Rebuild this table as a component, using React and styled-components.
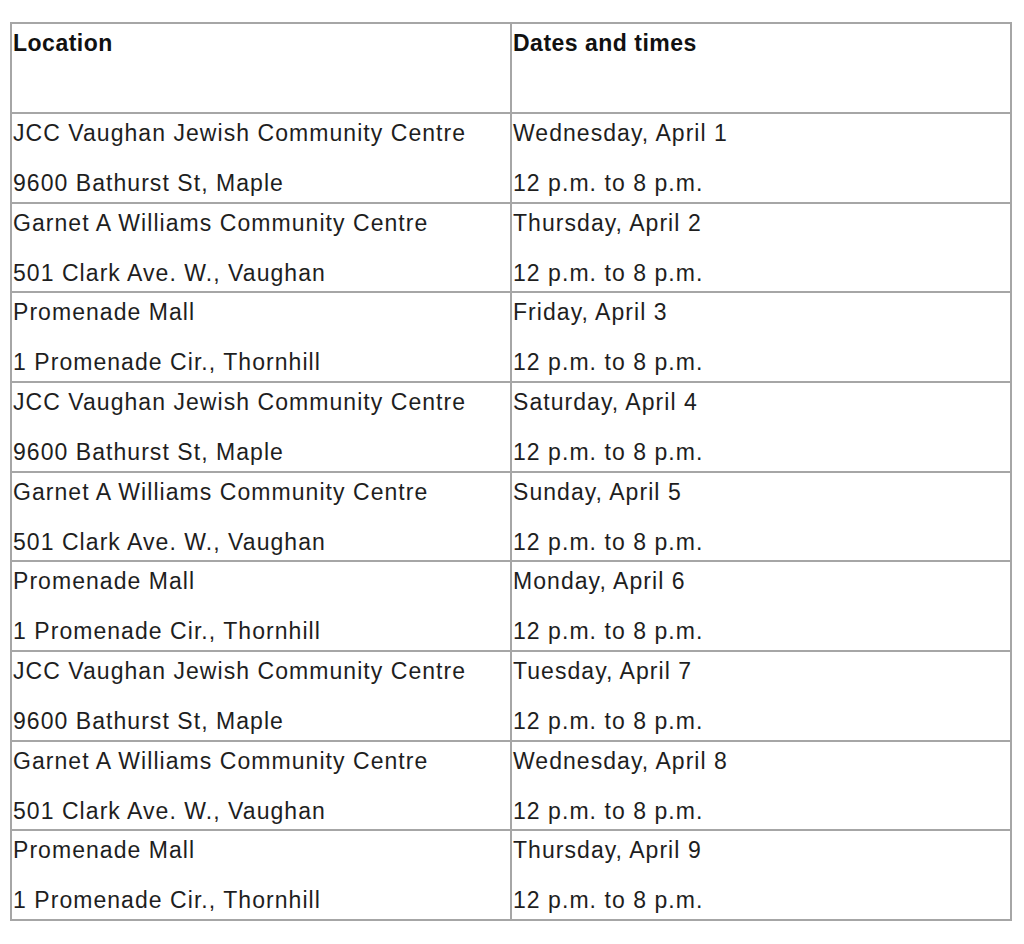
import styled, { createGlobalStyle } from 'styled-components';

const GlobalStyle = createGlobalStyle`
  body {
    margin: 0;
    background: #ffffff;
    font-family: 'Liberation Sans', Arial, sans-serif;
  }
`;

const places = [
  { name: 'JCC Vaughan Jewish Community Centre', address: '9600 Bathurst St, Maple' },
  { name: 'Garnet A Williams Community Centre', address: '501 Clark Ave. W., Vaughan' },
  { name: 'Promenade Mall', address: '1 Promenade Cir., Thornhill' },
];

const days = [
  'Wednesday, April 1',
  'Thursday, April 2',
  'Friday, April 3',
  'Saturday, April 4',
  'Sunday, April 5',
  'Monday, April 6',
  'Tuesday, April 7',
  'Wednesday, April 8',
  'Thursday, April 9',
];

const schedule = days.map((day, i) => ({ ...places[i % 3], day, time: '12 p.m. to 8 p.m.' }));

export default function App() {
  return (
    <Page>
      <GlobalStyle />
      <Table>
        <thead>
          <tr>
            <HeadCell>Location</HeadCell>
            <HeadCell>Dates and times</HeadCell>
          </tr>
        </thead>
        <tbody>
          {schedule.map((row) => (
            <tr key={row.day}>
              <Cell>
                <Line>{row.name}</Line>
                <Line>{row.address}</Line>
              </Cell>
              <Cell>
                <Line>{row.day}</Line>
                <Line>{row.time}</Line>
              </Cell>
            </tr>
          ))}
        </tbody>
      </Table>
    </Page>
  );
}

const Page = styled.div`
  padding: 22px 0 20px 10px;
`;

const Table = styled.table`
  width: 1002px;
  border-collapse: collapse;
  table-layout: fixed;
  color: #1e1e1e;
  font-size: 23px;
  letter-spacing: 1.05px;
`;

const HeadCell = styled.th`
  width: 50%;
  height: 90px;
  box-sizing: border-box;
  border: 2px solid #a6a6a6;
  padding: 5px 1px 0;
  text-align: left;
  vertical-align: top;
  font-weight: 700;
  letter-spacing: 0.5px;
  line-height: 28px;
  color: #111111;
`;

const Cell = styled.td`
  height: 89.67px;
  box-sizing: border-box;
  border: 2px solid #a6a6a6;
  padding: 5px 1px 0;
  vertical-align: top;
`;

const Line = styled.div`
  line-height: 28px;
  white-space: nowrap;

  & + & {
    margin-top: 22px;
  }
`;
